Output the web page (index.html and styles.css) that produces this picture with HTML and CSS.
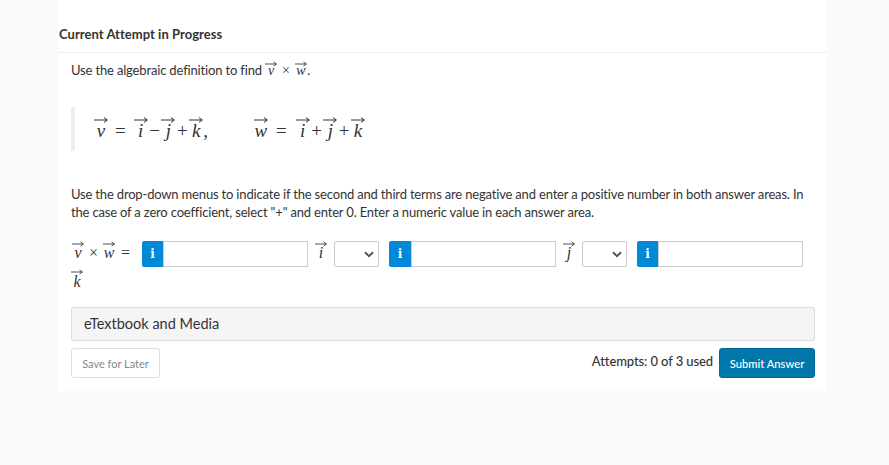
FILE: index.html
```html
<!DOCTYPE html>
<html lang="en">
<head>
<meta charset="utf-8">
<title>Current Attempt in Progress</title>
<link rel="stylesheet" href="styles.css">
</head>
<body>
<svg class="defs" width="0" height="0" aria-hidden="true"><defs>
<symbol id="arrow" viewBox="0 0 14 6"><path d="M0 3H13M10 .6 13.4 3 10 5.4" fill="none" stroke="#333" stroke-width="1"/></symbol>
<symbol id="chev" viewBox="0 0 10 7"><path d="M1 1.2 5 5.2 9 1.2" fill="none" stroke="#555" stroke-width="2"/></symbol>
</defs></svg>
<main class="card">
  <h1 class="title">Current Attempt in Progress</h1>
  <div class="body">
    <p class="prompt">Use the algebraic definition to find <span class="math small"><span class="vec"><svg class="arr"><use href="#arrow"/></svg>v</span><span class="op">×</span><span class="vec"><svg class="arr"><use href="#arrow"/></svg>w</span><span class="up">.</span></span></p>
    <blockquote class="quote">
      <div class="math big eq">
        <span class="vec"><svg class="arr"><use href="#arrow"/></svg>v</span><span class="op">=</span><span class="vec"><svg class="arr"><use href="#arrow"/></svg>i</span><span class="op tight">−</span><span class="vec"><svg class="arr"><use href="#arrow"/></svg>j</span><span class="op tight">+</span><span class="vec"><svg class="arr"><use href="#arrow"/></svg>k</span><span class="up">,</span>
        <span class="eq-gap"></span>
        <span class="vec"><svg class="arr"><use href="#arrow"/></svg>w</span><span class="op wide">=</span><span class="vec"><svg class="arr"><use href="#arrow"/></svg>i</span><span class="op tight">+</span><span class="vec"><svg class="arr"><use href="#arrow"/></svg>j</span><span class="op tight">+</span><span class="vec"><svg class="arr"><use href="#arrow"/></svg>k</span>
      </div>
    </blockquote>
    <p class="instr">Use the drop-down menus to indicate if the second and third terms are negative and enter a positive number in both answer areas. In the case of a zero coefficient, select "+" and enter 0. Enter a numeric value in each answer area.</p>
    <div class="answer">
      <span class="math mid lhs"><span class="vec"><svg class="arr"><use href="#arrow"/></svg>v</span><span class="op">×</span><span class="vec"><svg class="arr"><use href="#arrow"/></svg>w</span><span class="op eq-op">=</span></span>
      <span class="field"><span class="info">i</span><span class="entry"></span></span>
      <span class="math mid unit"><span class="vec"><svg class="arr"><use href="#arrow"/></svg>i</span></span>
      <span class="pick"><svg class="chev"><use href="#chev"/></svg></span>
      <span class="field middle"><span class="info">i</span><span class="entry"></span></span>
      <span class="math mid unit"><span class="vec"><svg class="arr"><use href="#arrow"/></svg>j</span></span>
      <span class="pick"><svg class="chev"><use href="#chev"/></svg></span>
      <span class="field"><span class="info">i</span><span class="entry"></span></span>
      <span class="math mid unit last"><span class="vec"><svg class="arr"><use href="#arrow"/></svg>k</span></span>
    </div>
    <div class="media">eTextbook and Media</div>
    <div class="actions">
      <button class="save" type="button">Save for Later</button>
      <div class="submit-wrap">
        <span class="attempts">Attempts: 0 of 3 used</span>
        <button class="submit" type="button">Submit Answer</button>
      </div>
    </div>
  </div>
</main>
</body>
</html>
```
FILE: styles.css
```css
* { box-sizing: border-box; }
html, body { margin: 0; height: 100%; }
body { background: #fafafa; font-family: Lato, "Liberation Sans", sans-serif; color: #333; overflow: hidden; }
.defs { display: block; height: 0; }
.card { width: 768px; height: 391px; margin-left: 59px; background: #fff; }
.title { margin: 0; height: 53px; padding-top: 26px; font-size: 13px; line-height: 16px; font-weight: 700; letter-spacing: .04px; color: #333; border-bottom: 1px solid #eee; }
.body { padding: 0 12px; }
.prompt { margin: 0; height: 54px; padding-top: 8px; font-size: 13px; line-height: 18px; letter-spacing: -.16px; white-space: nowrap; }
.math { font-family: "Liberation Serif", serif; font-style: italic; color: #333; display: inline-flex; align-items: baseline; letter-spacing: 0; white-space: nowrap; }
.vec { position: relative; display: inline-block; text-align: center; width: 12px; }
.arr { position: absolute; left: 0; width: 100%; height: 6px; top: -1px; }
.op { font-style: normal; margin: 0 5px; }
.up { font-style: normal; }
.small { font-size: 14px; margin-left: 0; }
.big { font-size: 19px; }
.big .vec { width: 14px; }
.big .arr { top: -2px; }
.big .op { margin: 0 8px 0 7px; }
.big .op.wide { margin: 0 9px 0 8px; }
.big .op.tight { margin: 0 1.5px; }
.mid { font-size: 16px; }
.mid .arr { top: -3px; }
.quote { margin: 0; width: 744px; height: 44px; border-left: 4px solid #eee; padding: 12px 0 0 19px; }
.eq { line-height: 24px; }
.eq-gap { display: inline-block; width: 46px; }
.instr { margin: 0; padding-top: 34px; font-size: 13px; line-height: 18px; letter-spacing: -.175px; }
.answer { display: flex; flex-wrap: wrap; align-items: flex-start; margin-top: 20px; row-gap: 6px; width: 744px; }
.lhs { width: 71px; height: 26px; padding: 3px 0 0 1px; }
.lhs .op { margin: 0 5px; }
.lhs .eq-op { margin-left: 6px; }
.field { display: flex; width: 166px; height: 26px; }
.field.middle { width: 167px; }
.info { width: 21px; background: #0089d9; color: #fff; border-radius: 2px 0 0 2px; font: 700 12px/26px "DejaVu Serif", serif; text-align: center; }
.middle .info { width: 22px; }
.entry { flex: 1; border: 1px solid #ccc; background: #fff; }
.unit { width: 26px; height: 26px; padding: 3px 0 0 7px; }
.unit.last { width: 24px; height: 24px; padding: 0; }
.unit.last .arr { top: -4px; }
.pick { display: flex; align-items: center; justify-content: flex-end; width: 45px; height: 26px; margin-right: 10px; padding-right: 4px; border: 1px solid #ccc; border-radius: 2px; background: #fff; }
.chev { width: 10px; height: 7px; }
.media { margin-top: 10px; width: 744px; height: 34px; padding: 0 12px; background: #f5f5f5; border: 1px solid #ddd; border-radius: 2px; font-size: 14.5px; line-height: 32px; color: #333; }
.actions { display: flex; justify-content: space-between; align-items: flex-start; margin-top: 7px; width: 744px; }
.save { width: 89px; height: 30px; padding: 0; background: #fff; border: 1px solid #ddd; border-radius: 3px; font: 400 11px Lato, sans-serif; color: #888; }
.submit-wrap { display: flex; gap: 6px; align-items: flex-start; }
.attempts { font-size: 13px; font-weight: 500; line-height: 26px; color: #333; letter-spacing: -.1px; }
.submit { width: 96px; height: 30px; padding: 0; background: #0077a8; border: 1px solid #00699a; border-radius: 3px; font: 500 11.2px Lato, sans-serif; color: #fff; }
```
